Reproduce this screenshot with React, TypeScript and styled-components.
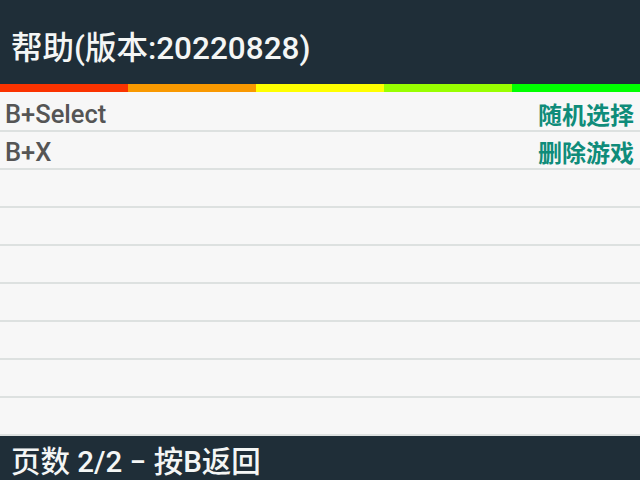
import React from 'react';
import styled, { createGlobalStyle } from 'styled-components';

const GlobalStyle = createGlobalStyle`
  html, body {
    margin: 0;
    padding: 0;
    background: #f7f7f7;
  }
  body {
    font-family: Roboto, "Noto Sans CJK SC", sans-serif;
  }
`;

const Screen = styled.div`
  display: flex;
  flex-direction: column;
  height: 480px;
  overflow: hidden;
  width: 640px;
`;

const Header = styled.header`
  align-items: center;
  background-color: #1f2e38;
  box-sizing: border-box;
  color: #f4f6f5;
  display: flex;
  font-size: 31.5px;
  font-weight: 500;
  height: 84px;
  padding: 6px 0 0 11px;
`;

const ColorBar = styled.div`
  display: grid;
  grid-template-columns: repeat(5, 1fr);
  height: 8px;
`;

const Segment = styled.div<{ $color: string }>`
  background-color: ${({ $color }) => $color};
`;

const List = styled.div`
  background: #f7f7f7;
  display: flex;
  flex: 1;
  flex-direction: column;
  padding-top: 2px;
`;

const Row = styled.div`
  align-items: center;
  border-bottom: 2px solid #dde1e0;
  box-sizing: border-box;
  display: flex;
  height: 38px;
  justify-content: space-between;
  padding: 3px 6px 0 5px;
`;

const Key = styled.span`
  color: #555555;
  font-size: 25.5px;
  font-weight: 500;
`;

const Action = styled.span`
  color: #0f8c7a;
  font-size: 24px;
  font-weight: 700;
`;

const Footer = styled.footer`
  align-items: center;
  background-color: #1f2e38;
  box-sizing: border-box;
  color: #f4f6f5;
  display: flex;
  font-size: 29.5px;
  font-weight: 500;
  height: 44px;
  padding: 2px 0 0 11px;
`;

const colors = ['#fb3300', '#f99900', '#ffff00', '#99ff00', '#00ff00'];

const rows: Array<[string, string]> = [
  ['B+Select', '随机选择'],
  ['B+X', '删除游戏'],
  ['', ''],
  ['', ''],
  ['', ''],
  ['', ''],
  ['', ''],
  ['', ''],
  ['', ''],
];

export default function App() {
  return (
    <Screen>
      <GlobalStyle />
      <Header>帮助(版本:20220828)</Header>
      <ColorBar>
        {colors.map((c) => (
          <Segment key={c} $color={c} />
        ))}
      </ColorBar>
      <List>
        {rows.map(([k, a], i) => (
          <Row key={i}>
            <Key>{k}</Key>
            <Action>{a}</Action>
          </Row>
        ))}
      </List>
      <Footer>页数 2/2 − 按B返回</Footer>
    </Screen>
  );
}
